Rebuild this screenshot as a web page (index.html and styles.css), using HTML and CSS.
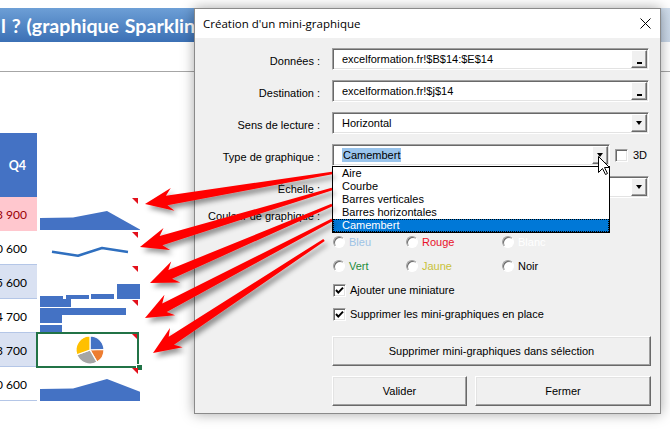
FILE: index.html
```html
<!DOCTYPE html>
<html lang="fr">
<head>
<meta charset="utf-8">
<title>Création d'un mini-graphique</title>
<link rel="stylesheet" href="styles.css">
</head>
<body>
<div class="sheet">
  <div class="banner">l ? (graphique Sparkline)</div>
  <div class="rule"></div>
  <div class="grid">
    <div class="hdr">Q4</div>
    <div class="blank"></div>

    <div class="val bad"><span>13 900</span></div>
    <div class="spark">
      <svg width="100" height="34" viewBox="0 0 100 34"><polygon fill="#4472c4" points="0,21 33,20.5 67,14 100,32.5 100,33 0,33"/></svg>
      <i class="cmt"></i>
    </div>

    <div class="val"><span>10 600</span></div>
    <div class="spark">
      <svg width="100" height="34" viewBox="0 0 100 34"><polyline fill="none" stroke="#2f6fbf" stroke-width="2.6" stroke-linejoin="round" points="12,20.7 38,24.7 62,17 88,21"/></svg>
      <i class="cmt"></i>
    </div>

    <div class="val alt"><span>15 600</span></div>
    <div class="spark">
      <svg width="100" height="34" viewBox="0 0 100 34"><g fill="#4472c4"><rect x="0" y="31" width="23" height="3"/><rect x="26" y="30" width="23" height="4"/><rect x="51" y="29" width="23" height="5"/><rect x="77" y="19" width="23" height="15"/></g></svg>
      <i class="cmt"></i>
    </div>

    <div class="val"><span>14 700</span></div>
    <div class="spark">
      <svg width="100" height="34" viewBox="0 0 100 34"><g fill="#4472c4"><rect x="0" y="0" width="31" height="8"/><rect x="0" y="9" width="86" height="7"/><rect x="0" y="16" width="22" height="8"/><rect x="0" y="26" width="22" height="8"/></g></svg>
      <i class="cmt"></i>
    </div>

    <div class="val alt"><span>13 700</span></div>
    <div class="spark">
      <svg width="100" height="34" viewBox="0 0 100 34"><g stroke="#fff" stroke-width="1.2" stroke-linejoin="round">
        <path fill="#4472c4" d="M50,17 L50,3 A14,14 0 0 1 63.99,16.51 Z"/>
        <path fill="#ed7d31" d="M50,17 L63.99,16.51 A14,14 0 0 1 57,29.12 Z"/>
        <path fill="#a5a5a5" d="M50,17 L57,29.12 A14,14 0 0 1 36.84,21.79 Z"/>
        <path fill="#ffc000" d="M50,17 L36.84,21.79 A14,14 0 0 1 50,3 Z"/>
      </g></svg>
      <i class="cmt"></i>
      <i class="sel"></i>
      <i class="handle"></i>
    </div>

    <div class="val"><span>10 600</span></div>
    <div class="spark">
      <svg width="100" height="34" viewBox="0 0 100 34"><polygon fill="#4472c4" points="0,22 33,21.6 67,12 100,24.7 100,34 0,34"/></svg>
      <i class="cmt"></i>
    </div>
  </div>
</div>

<div class="dialog">
  <div class="titlebar">
    <span>Création d'un mini-graphique</span>
    <svg class="close" width="11" height="11" viewBox="0 0 11 11"><path d="M0.5,0.5 L10.5,10.5 M10.5,0.5 L0.5,10.5" stroke="#000" stroke-width="1" fill="none"/></svg>
  </div>
  <div class="body">
    <div class="row">
      <span class="lbl">Données :</span>
      <div class="field"><span class="txt">excelformation.fr!$B$14:$E$14</span><span class="fbtn ref"><i class="us"></i></span></div>
    </div>
    <div class="row">
      <span class="lbl">Destination :</span>
      <div class="field"><span class="txt">excelformation.fr!$j$14</span><span class="fbtn ref"><i class="us"></i></span></div>
    </div>
    <div class="row">
      <span class="lbl">Sens de lecture :</span>
      <div class="field"><span class="txt">Horizontal</span><span class="fbtn"><i class="tri"></i></span></div>
    </div>
    <div class="row">
      <span class="lbl">Type de graphique :</span>
      <div class="field short">
        <span class="txt"><mark>Camembert</mark></span><span class="fbtn"><i class="tri"></i></span>
        <ul class="list">
          <li>Aire</li>
          <li>Courbe</li>
          <li>Barres verticales</li>
          <li>Barres horizontales</li>
          <li class="on">Camembert</li>
        </ul>
      </div>
      <span class="box"></span><span>3D</span>
    </div>
    <div class="row">
      <span class="lbl">Échelle :</span>
      <div class="field"><span class="txt"></span><span class="fbtn"><i class="tri"></i></span></div>
    </div>
    <div class="row colorlbl">
      <span class="lbl">Couleur de graphique :</span>
    </div>
    <div class="opts">
      <div class="radios">
        <label class="opt"><i class="radio"></i><span class="c-bleu">Bleu</span></label>
        <label class="opt"><i class="radio"></i><span class="c-rouge">Rouge</span></label>
        <label class="opt"><i class="radio"></i><span class="c-blanc">Blanc</span></label>
        <label class="opt"><i class="radio"></i><span class="c-vert">Vert</span></label>
        <label class="opt"><i class="radio"></i><span class="c-jaune">Jaune</span></label>
        <label class="opt"><i class="radio"></i><span>Noir</span></label>
      </div>
      <label class="opt chk"><span class="box"><svg width="11" height="11" viewBox="0 0 11 11"><path d="M2,5 L4.3,7.6 L9,2.6" fill="none" stroke="#000" stroke-width="2"/></svg></span><span>Ajouter une miniature</span></label>
      <label class="opt chk"><span class="box"><svg width="11" height="11" viewBox="0 0 11 11"><path d="M2,5 L4.3,7.6 L9,2.6" fill="none" stroke="#000" stroke-width="2"/></svg></span><span>Supprimer les mini-graphiques en place</span></label>
      <button class="btn wide">Supprimer mini-graphiques dans sélection</button>
      <div class="pair">
        <button class="btn ok">Valider</button>
        <button class="btn cancel">Fermer</button>
      </div>
    </div>
  </div>
</div>

<svg class="arrows" width="670" height="430" viewBox="0 0 670 430">
  <defs>
    <filter id="sh" x="-20%" y="-30%" width="140%" height="170%">
      <feDropShadow dx="3" dy="4" stdDeviation="2.5" flood-color="#000" flood-opacity="0.4"/>
    </filter>
  </defs>
  <g fill="#ff0000" filter="url(#sh)">
    <polygon transform="translate(145 204) rotate(-9.41)" points="0,0 28,-11.5 22,-4.8 189.6,-1.3 189.6,1.3 22,4.8 28,11.5"/>
    <polygon transform="translate(140 247) rotate(-16.81)" points="0,0 28,-11.5 22,-4.8 200.6,-1.3 200.6,1.3 22,4.8 28,11.5"/>
    <polygon transform="translate(150 283) rotate(-23.2)" points="0,0 28,-11.5 22,-4.8 198,-1.3 198,1.3 22,4.8 28,11.5"/>
    <polygon transform="translate(145 318) rotate(-27.66)" points="0,0 28,-11.5 22,-4.8 211.1,-1.3 211.1,1.3 22,4.8 28,11.5"/>
    <polygon transform="translate(153 353) rotate(-33.46)" points="0,0 28,-11.5 22,-4.8 205,-1.3 205,1.3 22,4.8 28,11.5"/>
  </g>
</svg>

<svg class="cursor" width="13" height="20" viewBox="0 0 13 20">
  <path d="M0.5,0.5 L0.5,16.5 L4.5,12.5 L7.5,18.5 L9.5,17.5 L6.5,11.5 L11.5,11.5 Z" fill="#fff" stroke="#000" stroke-width="1" stroke-linejoin="miter"/>
</svg>
</body>
</html>
```

FILE: styles.css
```css
* { box-sizing: border-box; margin: 0; padding: 0; }
html, body { width: 670px; height: 430px; overflow: hidden; background: #fff; }
body { position: relative; font-family: "Liberation Sans", Arial, sans-serif; color: #000; }

/* ---------- spreadsheet background ---------- */
.sheet { padding-top: 8px; }
.banner {
  height: 34px;
  background:
    linear-gradient(to right, rgba(255, 255, 255, 0) 655px, rgba(225, 232, 240, 0.85) 662px),
    linear-gradient(#6d9fd6, #3b70b5);
  color: #fff;
  font: 700 19.6px/35px Lato, sans-serif;
  padding-left: 1px;
  word-spacing: 1px;
  white-space: nowrap;
  overflow: hidden;
}
.rule { margin-top: 29px; height: 1px; background: #a6a6a6; }
.grid {
  margin-top: 61px;
  display: grid;
  grid-template-columns: 37px 103px;
  grid-template-rows: 64px repeat(6, 34px);
  font-family: Lato, sans-serif;
}
.hdr {
  background: #4472c4;
  color: #fff;
  font-weight: 700;
  font-size: 12.5px;
  display: flex;
  align-items: center;
  justify-content: flex-end;
  padding-right: 11px;
}
.val {
  display: flex;
  align-items: center;
  justify-content: flex-end;
  padding: 2px 10px 0 0;
  overflow: hidden;
  white-space: nowrap;
  font-size: 12px;
  border-bottom: 1px solid #b4c6e7;
}
.val span { flex: none; }
.val.bad { background: #ffc7ce; color: #9c0006; border-bottom-color: #ffc7ce; }
.val.alt { background: #d9e1f2; }
.spark { position: relative; }
.spark svg { display: block; margin-left: 3px; }
.cmt {
  position: absolute;
  top: 1px;
  right: 2px;
  width: 0;
  height: 0;
  border-top: 6px solid #e3101b;
  border-left: 6px solid transparent;
}
.sel {
  position: absolute;
  left: -1px;
  top: -1px;
  right: 1px;
  bottom: -1px;
  border: 2px solid #217346;
}
.handle {
  position: absolute;
  left: 100px;
  top: 32px;
  width: 5px;
  height: 5px;
  background: #217346;
  outline: 1px solid #fff;
}

/* ---------- dialog ---------- */
.dialog {
  position: absolute;
  left: 194px;
  top: 8px;
  width: 467px;
  height: 406px;
  background: #f0f0f0;
  border: 1px solid #8a8a8a;
  box-shadow: 0 0 12px rgba(0, 0, 0, 0.35);
  font-size: 11px;
}
.titlebar {
  height: 29px;
  background: #fff;
  display: flex;
  align-items: center;
  justify-content: space-between;
  padding: 0 9px 0 8px;
  font: 11.5px "Open Sans", "Noto Sans", sans-serif;
}
.close { display: block; }
.body { padding: 10px 11px 0 0; }
.row {
  display: flex;
  align-items: center;
  gap: 12px;
  height: 22px;
  margin-bottom: 10px;
}
.lbl { flex: none; width: 125px; text-align: right; padding-top: 4px; }
.row.colorlbl { margin-top: -5px; margin-bottom: 5px; }

.field {
  position: relative;
  flex: 1;
  height: 22px;
  display: flex;
  align-items: center;
  background: #fff;
  border: 1px solid;
  border-color: #a0a0a0 #fff #fff #a0a0a0;
  box-shadow: inset 1px 1px 0 #696969, inset -1px -1px 0 #e3e3e3;
  padding: 0 1px 0 9px;
}
.field.short { flex: none; width: 278px; }
.txt { flex: 1; white-space: nowrap; }
mark { background: #99c4ec; color: #000; padding: 1px 1px; }
.fbtn {
  flex: none;
  width: 16px;
  height: 18px;
  background: #f0f0f0;
  border: 1px solid;
  border-color: #fff #696969 #696969 #fff;
  box-shadow: inset -1px -1px 0 #a0a0a0;
  display: flex;
  align-items: center;
  justify-content: center;
}
.fbtn.ref { align-items: flex-end; padding-bottom: 3px; }
.us { display: block; width: 5px; height: 2px; background: #000; }
.tri {
  display: block;
  width: 0;
  height: 0;
  border-left: 3.5px solid transparent;
  border-right: 3.5px solid transparent;
  border-top: 4px solid #000;
}
.list {
  position: absolute;
  left: -1px;
  top: 21px;
  width: 278px;
  list-style: none;
  background: #fff;
  border: 1px solid #000;
  z-index: 3;
}
.list li { height: 13px; line-height: 13px; padding-left: 9px; white-space: nowrap; }
.list li.on { background: #0078d7; color: #fff; outline: 1px dotted #000; outline-offset: -1px; }

.box {
  flex: none;
  width: 13px;
  height: 13px;
  background: #fff;
  border: 1px solid;
  border-color: #a0a0a0 #fff #fff #a0a0a0;
  box-shadow: inset 1px 1px 0 #696969, inset -1px -1px 0 #e3e3e3;
  display: flex;
  align-items: center;
  justify-content: center;
}
.row .box { margin-left: -7px; margin-right: -7px; }
.box svg { display: block; }

.opts { margin-left: 137px; }
.radios {
  display: grid;
  grid-template-columns: 73px 96px auto;
  grid-auto-rows: 24px;
  padding-left: 1px;
}
.opt { display: flex; align-items: center; gap: 4px; }
.chk { height: 24px; padding-left: 1px; }
.radio {
  flex: none;
  width: 12px;
  height: 12px;
  border-radius: 50%;
  background: #fff;
  border: 1px solid;
  border-color: #a0a0a0 #fff #fff #a0a0a0;
  box-shadow: inset 1px 1px 0 #696969;
}
.c-bleu { color: #9dc3e6; }
.c-rouge { color: #e8102a; }
.c-blanc { color: #fff; }
.c-vert { color: #1e8c3c; }
.c-jaune { color: #c8c23a; }

.btn {
  display: flex;
  align-items: center;
  justify-content: center;
  height: 30px;
  font: inherit;
  color: #000;
  background: #f0f0f0;
  border: 1px solid;
  border-color: #fff #696969 #696969 #fff;
  box-shadow: inset -1px -1px 0 #a0a0a0, inset 1px 1px 0 #e3e3e3;
}
.wide { width: 319px; margin-top: 10px; }
.pair { display: flex; justify-content: space-between; width: 319px; margin-top: 10px; }
.ok { width: 135px; }
.cancel { width: 176px; }

/* ---------- overlays ---------- */
.arrows { position: absolute; left: 0; top: 0; pointer-events: none; z-index: 5; }
.cursor { position: absolute; left: 598px; top: 156px; z-index: 6; }
```
